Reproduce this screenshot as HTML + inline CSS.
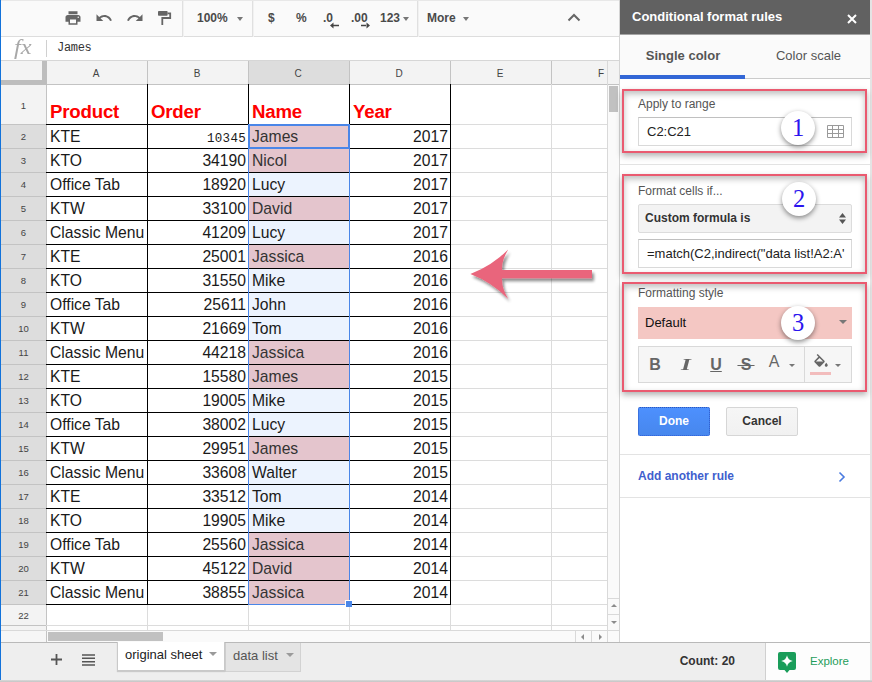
<!DOCTYPE html>
<html lang="en"><head><meta charset="utf-8"><title>Conditional format rules</title>
<style>
*{box-sizing:border-box;margin:0;padding:0}
html,body{width:872px;height:682px;overflow:hidden;background:#fff}
body{font-family:"Liberation Sans",Arial,sans-serif;color:#222}
#app{position:relative;width:872px;height:682px;overflow:hidden;background:#fff}
.abs{position:absolute}
/* left strip */
#lstrip{position:absolute;left:0;top:0;width:1px;height:680px;background:#1272da;z-index:50}
/* toolbar */
#tb{position:absolute;left:0;top:0;width:620px;height:37px;background:#fafafa;border-bottom:1px solid #dddddd;border-top:1px solid #e8e8e8}
#tb .sep{position:absolute;top:0;width:1px;height:36px;background:#e0e0e0;box-shadow:1px 0 0 #f1f1f1}
#tb .t{position:absolute;top:0;height:36px;line-height:35px;font-size:12px;font-weight:bold;color:#4a4a4a;white-space:nowrap}
#tb svg{position:absolute}
.dd{position:absolute;width:0;height:0;border-left:3.5px solid transparent;border-right:3.5px solid transparent;border-top:4px solid #777}
/* formula bar */
#fb{position:absolute;left:0;top:37px;width:620px;height:24px;background:#fff;border-bottom:1px solid #d6d6d6}
#fb .fx{position:absolute;left:14px;top:-2px;font-family:"Liberation Serif",serif;font-style:italic;font-size:20px;color:#a8a8a8;line-height:24px;letter-spacing:0;transform:scaleX(1.220);transform-origin:0 50%}
#fb .fsep{position:absolute;left:46px;top:3px;width:1px;height:17px;background:#d0d0d0}
#fb .fv{position:absolute;left:57px;top:0;font-family:"Liberation Mono","DejaVu Sans Mono",monospace;font-size:12px;line-height:23px;color:#333;letter-spacing:-.3px}
/* grid */
#grid{position:absolute;left:0;top:0;width:607px;height:630px;overflow:hidden}
.corner{position:absolute;left:0;top:61px;width:47px;height:24px;background:#f3f3f3;border-right:5px solid #bdbdbd;border-bottom:5px solid #bdbdbd}
.ch{position:absolute;top:61px;height:24px;background:#f3f3f3;border-right:1px solid #c3c3c3;border-bottom:1px solid #c3c3c3;text-align:center;font-size:10px;line-height:25px;color:#444;padding-right:2px}
.ch.sel{background:#dddddd}
.rh{position:absolute;left:0;width:47px;background:#f3f3f3;border-right:1px solid #c3c3c3;border-bottom:1px solid #c3c3c3;text-align:center;font-size:9.500px;color:#444;padding-left:1px}
.rh.sel{background:#dddddd}
.vl{position:absolute;top:84px;width:1px;height:546px;background:#dcdcdc}
.hl{position:absolute;left:46px;width:562px;height:1px;background:#dcdcdc}
.hc{position:absolute;top:85px;height:39px;font-size:18.670px;letter-spacing:-.2px;font-weight:bold;color:#f00;line-height:21px;padding:16px 0 0 3px;background:#fff;white-space:nowrap;overflow:hidden}
.c{position:absolute;height:23px;font-size:15.700px;line-height:23px;padding:0 3px;color:#1a1a1a;background:#fff;white-space:nowrap;overflow:hidden}
.c.r{text-align:right;padding-right:2px}
.c.mono{font-family:"Liberation Mono","DejaVu Sans Mono",monospace;font-size:12.500px;letter-spacing:.3px;line-height:29px;padding-right:2px}
.c.nm{background:#ecf3fe}
.c.nm.hlt{background:#e4c5cd;color:#333}
.c.nm.act{background:#e5c7ce}
.bv{position:absolute;top:84px;width:1px;height:521px;background:#000}
.bh{position:absolute;left:46px;width:405px;height:1px;background:#000}
.selrange{position:absolute;left:248px;top:124px;width:102px;height:481px;border:1px solid #4a86e8}
.active{position:absolute;left:248px;top:124px;width:102px;height:25px;border:2px solid #4a86e8}
.handle{position:absolute;left:346px;top:601px;width:6px;height:6px;background:#4a86e8;border-top:1px solid #fff;border-left:1px solid #fff;box-sizing:content-box;margin:-1px 0 0 -1px}
/* scrollbars */
#vs{position:absolute;left:607px;top:61px;width:12px;height:581px;background:#fafafa;border-left:1px solid #d9d9d9}
#vs .top{position:absolute;left:0;top:0;width:11px;height:24px;background:#f3f3f3;border-bottom:1px solid #c3c3c3}
#vs .thumb{position:absolute;left:1px;top:25px;width:9px;height:26px;background:#c1c1c1}
#vs .btns{position:absolute;left:0;top:537px;width:11px;height:33px;border-top:1px solid #d9d9d9;border-bottom:1px solid #d9d9d9;background:#fafafa}
.ta{position:absolute;width:0;height:0}
#hs{position:absolute;left:1px;top:630px;width:607px;height:12px;background:#fafafa;border-top:1px solid #d9d9d9}
#hs .thumb{position:absolute;left:47px;top:1px;width:115px;height:9px;background:#c1c1c1}
#hs .lead{position:absolute;left:0;top:0;width:46px;height:11px;border-right:1px solid #c3c3c3;background:#f6f6f6}
#hs .btns{position:absolute;left:574px;top:0;width:33px;height:11px;border-left:1px solid #d9d9d9;border-right:1px solid #d9d9d9}
/* bottom bar */
#bb{position:absolute;left:0;top:642px;width:870px;height:38px;background:#eeeeee;border-top:1px solid #b9b9b9}
#bb .tab{position:absolute;top:-1px;height:29px;font-size:13px;line-height:25px;white-space:nowrap;padding-left:7px}
#bb .tab.on{left:117px;width:108px;background:#fff;color:#222;border:1px solid #c9c9c9;border-top:none;box-shadow:0 1px 1px rgba(0,0,0,.15);z-index:2}
#bb .tab.off{left:225px;width:76px;top:0;background:#e4e4e4;color:#555;border:1px solid #d2d2d2;border-top:none;height:29px;line-height:25px}
#bb .cnt{position:absolute;right:135px;top:0;font-size:12px;font-weight:bold;color:#333;line-height:36px}
#bb .exp{position:absolute;left:765px;top:0;width:105px;height:37px;background:#fdfdfd;border-left:1px solid #d0d0d0}
#bb .exp span{position:absolute;left:44px;top:0;line-height:37px;font-size:11.500px;color:#1f9d5c}
#redge{position:absolute;left:870px;top:0;width:2px;height:682px;background:#e4e4e4}
#bedge{position:absolute;left:0;top:680px;width:872px;height:2px;background:linear-gradient(#dadada,#c4c4c4)}
/* panel */
#pn{position:absolute;left:619px;top:0;width:251px;height:642px;background:#fff;border-left:1px solid #d4d4d4}
#pn .hd{position:absolute;z-index:1;left:0;top:0;width:250px;height:35px;background:#616161;border-bottom:1px solid #a4a4a4;color:#fff;font-size:13px;font-weight:bold;line-height:34px;padding-left:12px}
#pn .tabs{position:absolute;left:0;top:34px;width:250px;height:45px;background:#fafafa;border-bottom:1px solid #cbcbcb}
#pn .tabs .a{position:absolute;left:0;top:0;width:125px;height:45px;text-align:center;line-height:44px;font-size:13px;font-weight:bold;color:#555;border-bottom:4px solid #3367d6;padding-left:1px}
#pn .tabs .b{position:absolute;left:125px;top:0;width:125px;height:44px;text-align:center;line-height:44px;font-size:13px;color:#555;padding-left:2px}
#pn .lbl{position:absolute;left:18px;font-size:12px;color:#555;line-height:14px;white-space:nowrap}
#pn .inp{position:absolute;left:18px;width:214px;height:29px;border:1px solid #d9d9d9;border-top-color:#c0c0c0;background:#fff;font-size:13px;line-height:27px;padding-left:8px;color:#222;white-space:nowrap;overflow:hidden}
#pn .selb{position:absolute;left:18px;width:214px;height:29px;border:1px solid #dcdcdc;background:#f3f3f3;font-size:12px;font-weight:bold;line-height:27px;padding-left:6px;color:#333;border-radius:2px}
#pn .line{position:absolute;left:0;width:250px;height:1px;background:#e3e3e3}
#pn .def{position:absolute;left:18px;top:307px;width:214px;height:32px;background:#f4c7c3;font-size:13px;line-height:31px;padding-left:7px;color:#111}
#pn .fmt{position:absolute;left:18px;top:346px;width:214px;height:37px;background:#f6f6f6;border:1px solid #d9d9d9}
#pn .fmt .s{position:absolute;left:165px;top:0;width:1px;height:35px;background:#d9d9d9}
#pn .fmt .g{position:absolute;top:0;height:35px;line-height:36px;font-size:16px;color:#666;text-align:center;width:20px}
#pn .done{position:absolute;left:18px;top:407px;width:72px;height:29px;background:linear-gradient(#4d90fe,#4787ed);border:1px dotted #2a56c6;border-radius:2px;color:#fff;font-size:12px;font-weight:bold;text-align:center;line-height:26px}
#pn .cancel{position:absolute;left:106px;top:407px;width:72px;height:29px;background:linear-gradient(#f6f6f6,#f1f1f1);border:1px solid #d6d6d6;border-radius:2px;color:#333;font-size:12px;font-weight:bold;text-align:center;line-height:26px}
#pn .add{position:absolute;left:18px;top:455px;font-size:12px;font-weight:bold;color:#3f5fce;line-height:42px}
/* annotations */
.rbox{position:absolute;left:622px;width:245px;border:2px solid #ea5a70;box-shadow:0 3px 6px rgba(0,0,0,.30), inset 0 3px 6px rgba(0,0,0,.26);z-index:20}
.circ{position:absolute;width:34px;height:34px;border-radius:50%;background:#fff;box-shadow:0 2px 5px rgba(0,0,0,.45);z-index:21;text-align:center;font-family:"Liberation Serif",serif;font-size:24.500px;line-height:33px;color:#2b14ee}
#arrow{position:absolute;left:460px;top:240px;z-index:22}

</style></head>
<body>
<div id="app">
<div id="lstrip"></div>
<div id="tb">
<div class="sep" style="left:182px"></div><div class="sep" style="left:252px"></div><div class="sep" style="left:417px"></div>
<svg style="left:64px;top:8px" width="18" height="18" viewBox="0 0 24 24"><path fill="#666" d="M19 8H5c-1.66 0-3 1.34-3 3v6h4v4h12v-4h4v-6c0-1.660-1.340-3-3-3zm-3 11H8v-5h8v5zm3-7c-.55 0-1-.45-1-1s.45-1 1-1 1 .45 1 1-.45 1-1 1zm-1-9H6v4h12V3z"/></svg>
<svg style="left:95px;top:8px" width="18" height="18" viewBox="0 0 24 24"><path fill="#666" d="M12.500 8c-2.650 0-5.050.99-6.900 2.600L2 7v9h9l-3.620-3.620c1.390-1.160 3.160-1.880 5.120-1.880 3.540 0 6.550 2.310 7.600 5.500l2.370-.78C21.080 11.030 17.150 8 12.500 8z"/></svg>
<svg style="left:126px;top:8px" width="18" height="18" viewBox="0 0 24 24"><path fill="#666" d="M18.400 10.600C16.550 8.990 14.150 8 11.500 8c-4.650 0-8.580 3.030-9.960 7.220L3.900 16c1.050-3.190 4.050-5.500 7.600-5.500 1.950 0 3.730.72 5.120 1.880L13 16h9V7l-3.600 3.600z"/></svg>
<svg style="left:157px;top:9px" width="15" height="16" viewBox="0 0 15 16"><rect x="1" y="1" width="9.600" height="4.800" rx=".8" fill="#666"/><path d="M10.500 3.400H13.200V8H5.300V15" fill="none" stroke="#666" stroke-width="1.800"/></svg>
<div class="t" style="left:197px">100%</div><div class="dd" style="left:237px;top:16px"></div>
<div class="t" style="left:268px">$</div>
<div class="t" style="left:296px">%</div>
<div class="t" style="left:323px">.0</div>
<svg style="left:330px;top:21px" width="9" height="7" viewBox="0 0 9 7"><path d="M0 3.500L3.500 0.500V6.500zM3 2.800H9V4.200H3z" fill="#444"/></svg>
<div class="t" style="left:351px">.00</div>
<svg style="left:361px;top:21px" width="9" height="7" viewBox="0 0 9 7"><path d="M9 3.500L5.500 0.500V6.500zM0 2.800H6V4.200H0z" fill="#444"/></svg>
<div class="t" style="left:380px">123</div><div class="dd" style="left:403px;top:16px"></div>
<div class="t" style="left:427px">More</div><div class="dd" style="left:463px;top:16px"></div>
<svg style="left:567px;top:11px" width="14" height="10" viewBox="0 0 14 10"><path d="M1.500 8.500L7 3L12.500 8.500" fill="none" stroke="#666" stroke-width="2"/></svg>
</div>
<div id="fb"><div class="fx">fx</div><div class="fsep"></div><div class="fv">James</div></div>
<div id="grid">
<div class="corner"></div>
<div class="ch" style="left:47px;width:101px">A</div>
<div class="ch" style="left:148px;width:101px">B</div>
<div class="ch sel" style="left:249px;width:101px">C</div>
<div class="ch" style="left:350px;width:101px">D</div>
<div class="ch" style="left:451px;width:101px">E</div>
<div class="ch" style="left:552px;width:101px">F</div>
<div class="rh" style="top:85px;height:40px;line-height:41px">1</div>
<div class="rh sel" style="top:125px;height:24px;line-height:24px">2</div>
<div class="rh sel" style="top:149px;height:24px;line-height:24px">3</div>
<div class="rh sel" style="top:173px;height:24px;line-height:24px">4</div>
<div class="rh sel" style="top:197px;height:24px;line-height:24px">5</div>
<div class="rh sel" style="top:221px;height:24px;line-height:24px">6</div>
<div class="rh sel" style="top:245px;height:24px;line-height:24px">7</div>
<div class="rh sel" style="top:269px;height:24px;line-height:24px">8</div>
<div class="rh sel" style="top:293px;height:24px;line-height:24px">9</div>
<div class="rh sel" style="top:317px;height:24px;line-height:24px">10</div>
<div class="rh sel" style="top:341px;height:24px;line-height:24px">11</div>
<div class="rh sel" style="top:365px;height:24px;line-height:24px">12</div>
<div class="rh sel" style="top:389px;height:24px;line-height:24px">13</div>
<div class="rh sel" style="top:413px;height:24px;line-height:24px">14</div>
<div class="rh sel" style="top:437px;height:24px;line-height:24px">15</div>
<div class="rh sel" style="top:461px;height:24px;line-height:24px">16</div>
<div class="rh sel" style="top:485px;height:24px;line-height:24px">17</div>
<div class="rh sel" style="top:509px;height:24px;line-height:24px">18</div>
<div class="rh sel" style="top:533px;height:24px;line-height:24px">19</div>
<div class="rh sel" style="top:557px;height:24px;line-height:24px">20</div>
<div class="rh sel" style="top:581px;height:24px;line-height:24px">21</div>
<div class="rh" style="top:605px;height:21px;line-height:21px">22</div>
<div class="rh" style="top:626px;height:5px"></div>
<div class="vl" style="left:147px"></div>
<div class="vl" style="left:248px"></div>
<div class="vl" style="left:349px"></div>
<div class="vl" style="left:450px"></div>
<div class="vl" style="left:551px"></div>
<div class="hl" style="top:124px"></div>
<div class="hl" style="top:148px"></div>
<div class="hl" style="top:172px"></div>
<div class="hl" style="top:196px"></div>
<div class="hl" style="top:220px"></div>
<div class="hl" style="top:244px"></div>
<div class="hl" style="top:268px"></div>
<div class="hl" style="top:292px"></div>
<div class="hl" style="top:316px"></div>
<div class="hl" style="top:340px"></div>
<div class="hl" style="top:364px"></div>
<div class="hl" style="top:388px"></div>
<div class="hl" style="top:412px"></div>
<div class="hl" style="top:436px"></div>
<div class="hl" style="top:460px"></div>
<div class="hl" style="top:484px"></div>
<div class="hl" style="top:508px"></div>
<div class="hl" style="top:532px"></div>
<div class="hl" style="top:556px"></div>
<div class="hl" style="top:580px"></div>
<div class="hl" style="top:604px"></div>
<div class="hl" style="top:625px"></div>
<div class="hc" style="left:47px;width:100px">Product</div>
<div class="hc" style="left:148px;width:100px">Order</div>
<div class="hc" style="left:249px;width:100px">Name</div>
<div class="hc" style="left:350px;width:100px">Year</div>
<div class="c" style="left:47px;top:125px;width:100px">KTE</div><div class="c r mono" style="left:148px;top:125px;width:100px">10345</div><div class="c nm hlt act" style="left:249px;top:125px;width:100px">James</div><div class="c r" style="left:350px;top:125px;width:100px">2017</div>
<div class="c" style="left:47px;top:149px;width:100px">KTO</div><div class="c r" style="left:148px;top:149px;width:100px">34190</div><div class="c nm hlt" style="left:249px;top:149px;width:100px">Nicol</div><div class="c r" style="left:350px;top:149px;width:100px">2017</div>
<div class="c" style="left:47px;top:173px;width:100px">Office Tab</div><div class="c r" style="left:148px;top:173px;width:100px">18920</div><div class="c nm" style="left:249px;top:173px;width:100px">Lucy</div><div class="c r" style="left:350px;top:173px;width:100px">2017</div>
<div class="c" style="left:47px;top:197px;width:100px">KTW</div><div class="c r" style="left:148px;top:197px;width:100px">33100</div><div class="c nm hlt" style="left:249px;top:197px;width:100px">David</div><div class="c r" style="left:350px;top:197px;width:100px">2017</div>
<div class="c" style="left:47px;top:221px;width:100px">Classic Menu</div><div class="c r" style="left:148px;top:221px;width:100px">41209</div><div class="c nm" style="left:249px;top:221px;width:100px">Lucy</div><div class="c r" style="left:350px;top:221px;width:100px">2017</div>
<div class="c" style="left:47px;top:245px;width:100px">KTE</div><div class="c r" style="left:148px;top:245px;width:100px">25001</div><div class="c nm hlt" style="left:249px;top:245px;width:100px">Jassica</div><div class="c r" style="left:350px;top:245px;width:100px">2016</div>
<div class="c" style="left:47px;top:269px;width:100px">KTO</div><div class="c r" style="left:148px;top:269px;width:100px">31550</div><div class="c nm" style="left:249px;top:269px;width:100px">Mike</div><div class="c r" style="left:350px;top:269px;width:100px">2016</div>
<div class="c" style="left:47px;top:293px;width:100px">Office Tab</div><div class="c r" style="left:148px;top:293px;width:100px">25611</div><div class="c nm" style="left:249px;top:293px;width:100px">John</div><div class="c r" style="left:350px;top:293px;width:100px">2016</div>
<div class="c" style="left:47px;top:317px;width:100px">KTW</div><div class="c r" style="left:148px;top:317px;width:100px">21669</div><div class="c nm" style="left:249px;top:317px;width:100px">Tom</div><div class="c r" style="left:350px;top:317px;width:100px">2016</div>
<div class="c" style="left:47px;top:341px;width:100px">Classic Menu</div><div class="c r" style="left:148px;top:341px;width:100px">44218</div><div class="c nm hlt" style="left:249px;top:341px;width:100px">Jassica</div><div class="c r" style="left:350px;top:341px;width:100px">2016</div>
<div class="c" style="left:47px;top:365px;width:100px">KTE</div><div class="c r" style="left:148px;top:365px;width:100px">15580</div><div class="c nm hlt" style="left:249px;top:365px;width:100px">James</div><div class="c r" style="left:350px;top:365px;width:100px">2015</div>
<div class="c" style="left:47px;top:389px;width:100px">KTO</div><div class="c r" style="left:148px;top:389px;width:100px">19005</div><div class="c nm" style="left:249px;top:389px;width:100px">Mike</div><div class="c r" style="left:350px;top:389px;width:100px">2015</div>
<div class="c" style="left:47px;top:413px;width:100px">Office Tab</div><div class="c r" style="left:148px;top:413px;width:100px">38002</div><div class="c nm" style="left:249px;top:413px;width:100px">Lucy</div><div class="c r" style="left:350px;top:413px;width:100px">2015</div>
<div class="c" style="left:47px;top:437px;width:100px">KTW</div><div class="c r" style="left:148px;top:437px;width:100px">29951</div><div class="c nm hlt" style="left:249px;top:437px;width:100px">James</div><div class="c r" style="left:350px;top:437px;width:100px">2015</div>
<div class="c" style="left:47px;top:461px;width:100px">Classic Menu</div><div class="c r" style="left:148px;top:461px;width:100px">33608</div><div class="c nm" style="left:249px;top:461px;width:100px">Walter</div><div class="c r" style="left:350px;top:461px;width:100px">2015</div>
<div class="c" style="left:47px;top:485px;width:100px">KTE</div><div class="c r" style="left:148px;top:485px;width:100px">33512</div><div class="c nm" style="left:249px;top:485px;width:100px">Tom</div><div class="c r" style="left:350px;top:485px;width:100px">2014</div>
<div class="c" style="left:47px;top:509px;width:100px">KTO</div><div class="c r" style="left:148px;top:509px;width:100px">19905</div><div class="c nm" style="left:249px;top:509px;width:100px">Mike</div><div class="c r" style="left:350px;top:509px;width:100px">2014</div>
<div class="c" style="left:47px;top:533px;width:100px">Office Tab</div><div class="c r" style="left:148px;top:533px;width:100px">25560</div><div class="c nm hlt" style="left:249px;top:533px;width:100px">Jassica</div><div class="c r" style="left:350px;top:533px;width:100px">2014</div>
<div class="c" style="left:47px;top:557px;width:100px">KTW</div><div class="c r" style="left:148px;top:557px;width:100px">45122</div><div class="c nm hlt" style="left:249px;top:557px;width:100px">David</div><div class="c r" style="left:350px;top:557px;width:100px">2014</div>
<div class="c" style="left:47px;top:581px;width:100px">Classic Menu</div><div class="c r" style="left:148px;top:581px;width:100px">38855</div><div class="c nm hlt" style="left:249px;top:581px;width:100px">Jassica</div><div class="c r" style="left:350px;top:581px;width:100px">2014</div>
<div class="bv" style="left:147px"></div>
<div class="bv" style="left:248px"></div>
<div class="bv" style="left:349px"></div>
<div class="bv" style="left:450px"></div>
<div class="bh" style="top:124px"></div>
<div class="bh" style="top:148px"></div>
<div class="bh" style="top:172px"></div>
<div class="bh" style="top:196px"></div>
<div class="bh" style="top:220px"></div>
<div class="bh" style="top:244px"></div>
<div class="bh" style="top:268px"></div>
<div class="bh" style="top:292px"></div>
<div class="bh" style="top:316px"></div>
<div class="bh" style="top:340px"></div>
<div class="bh" style="top:364px"></div>
<div class="bh" style="top:388px"></div>
<div class="bh" style="top:412px"></div>
<div class="bh" style="top:436px"></div>
<div class="bh" style="top:460px"></div>
<div class="bh" style="top:484px"></div>
<div class="bh" style="top:508px"></div>
<div class="bh" style="top:532px"></div>
<div class="bh" style="top:556px"></div>
<div class="bh" style="top:580px"></div>
<div class="bh" style="top:604px"></div>
<div class="selrange"></div><div class="active"></div><div class="handle"></div>
</div>
<div id="vs"><div class="top"></div><div class="thumb"></div>
<div class="btns">
<div class="ta" style="left:3px;top:5px;border-left:3px solid transparent;border-right:3px solid transparent;border-bottom:3.500px solid #8c8c8c"></div>
<div style="position:absolute;left:0;top:15px;width:11px;height:1px;background:#d9d9d9"></div>
<div class="ta" style="left:3px;top:22px;border-left:3px solid transparent;border-right:3px solid transparent;border-top:3.500px solid #8c8c8c"></div>
</div></div>
<div id="hs"><div class="lead"></div><div class="thumb"></div>
<div class="btns">
<div class="ta" style="left:5px;top:3px;border-top:3px solid transparent;border-bottom:3px solid transparent;border-right:3.500px solid #8c8c8c"></div>
<div style="position:absolute;left:15px;top:0;width:1px;height:11px;background:#d9d9d9"></div>
<div class="ta" style="left:23px;top:3px;border-top:3px solid transparent;border-bottom:3px solid transparent;border-left:3.500px solid #8c8c8c"></div>
</div></div>
<div id="pn">
<div class="hd">Conditional format rules</div>
<svg class="abs" style="left:227px;top:14px;z-index:2" width="10" height="10" viewBox="0 0 10 10"><path d="M1 1L9 9M9 1L1 9" stroke="#fff" stroke-width="2" fill="none"/></svg>
<div class="tabs"><div class="a">Single color</div><div class="b">Color scale</div></div>
<div class="lbl" style="top:97px">Apply to range</div>
<div class="inp" style="top:117px">C2:C21</div>
<svg class="abs" style="left:207px;top:125px" width="17" height="13" viewBox="0 0 17 13"><path d="M.500 .500H16.500V12.500H.500zM.500 4.500H16.500M.500 8.500H16.500M5.500 .500V12.500M11.500 .500V12.500" fill="none" stroke="#9a9a9a" stroke-width="1"/></svg>
<div class="line" style="top:164px"></div>
<div class="lbl" style="top:184px">Format cells if...</div>
<div class="selb" style="top:204px">Custom formula is</div>
<svg class="abs" style="left:219px;top:213px" width="7" height="11" viewBox="0 0 7 11"><path d="M0 4.500L3.500 0L7 4.500zM0 6.500L3.500 11L7 6.500z" fill="#555"/></svg>
<div class="inp" style="top:239px">=match(C2,indirect("data list!A2:A'</div>
<div class="lbl" style="top:286px">Formatting style</div>
<div class="def">Default</div>
<div class="dd" style="left:219px;top:320px;border-width:4px 4px 0 4px;border-top-color:#777"></div>
<div class="fmt"><div class="s"></div>
<div class="g" style="left:6px;font-weight:bold">B</div>
<div class="g" style="left:37px;font-style:italic;font-family:'Liberation Serif',serif;font-size:17px;font-weight:bold;transform:scaleX(1.500)">I</div>
<div class="g" style="left:67px;text-decoration:underline;font-weight:bold;font-size:16px">U</div>
<div class="g" style="left:95px;width:24px;text-decoration:line-through;font-weight:bold;font-size:16px">&#8201;S&#8201;</div>
<div class="g" style="left:125px;top:-3px">A</div>
<div class="dd" style="left:150px;top:17px;border-width:3.500px 3px 0 3px"></div>
<svg class="abs" style="left:173px;top:7px" width="18" height="18" viewBox="0 0 24 24"><path fill="#666" d="M16.560 8.940L7.620 0 6.210 1.410l2.380 2.380-5.150 5.150c-.59.590-.59 1.540 0 2.120l5.500 5.500c.29.290.68.440 1.060.440s.77-.15 1.060-.44l5.500-5.500c.59-.58.590-1.530 0-2.120zM5.210 10L10 5.210 14.790 10H5.210zM19 11.500s-2 2.170-2 3.500c0 1.100.9 2 2 2s2-.9 2-2c0-1.330-2-3.500-2-3.500z"/></svg>
<div class="abs" style="left:171px;top:25px;width:21px;height:3px;background:#f2bcbc"></div>
<div class="dd" style="left:196px;top:17px;border-width:3.500px 3px 0 3px"></div>
</div>
<div class="done">Done</div><div class="cancel">Cancel</div>
<div class="line" style="top:454px"></div>
<div class="add">Add another rule</div>
<svg class="abs" style="left:218px;top:471px" width="8" height="12" viewBox="0 0 8 12"><path d="M1.500 1.500L6 6L1.500 10.500" fill="none" stroke="#4a7be0" stroke-width="1.600"/></svg>
<div class="line" style="top:497px"></div>
</div>
<div id="bb">
<svg class="abs" style="left:51px;top:11px" width="11" height="11" viewBox="0 0 11 11"><path d="M5.500 0V11M0 5.500H11" stroke="#555" stroke-width="1.800" fill="none"/></svg>
<svg class="abs" style="left:82px;top:11px" width="13" height="12" viewBox="0 0 13 12"><path d="M0 1H13M0 4.300H13M0 7.700H13M0 11H13" stroke="#555" stroke-width="1.500" fill="none"/></svg>
<div class="tab on">original sheet<div class="dd" style="left:91px;top:10px;border-width:4px 4px 0 4px;border-top-color:#9a9a9a"></div></div>
<div class="tab off">data list<div class="dd" style="left:60px;top:10px;border-width:4px 4px 0 4px;border-top-color:#9a9a9a"></div></div>
<div class="cnt">Count: 20</div>
<div class="exp">
<svg class="abs" style="left:12px;top:9px" width="18" height="22" viewBox="0 0 18 22"><path d="M2 0H16Q18 0 18 2V16Q18 18 16 18H11.500L9 21L6.500 18H2Q0 18 0 16V2Q0 0 2 0Z" fill="#1a9d5a"/><path d="M9 3.200Q9.900 8.100 14.800 9Q9.900 9.900 9 14.800Q8.100 9.900 3.200 9Q8.100 8.100 9 3.200Z" fill="#fff"/></svg>
<span>Explore</span></div>
</div>
<div id="redge"></div><div id="bedge"></div>
<div class="rbox" style="top:89px;height:64px"></div>
<div class="rbox" style="top:174px;height:100px"></div>
<div class="rbox" style="top:282px;height:110px"></div>
<div class="circ" style="left:781px;top:111px">1</div>
<div class="circ" style="left:782px;top:182px">2</div>
<div class="circ" style="left:781px;top:306px">3</div>
<svg id="arrow" width="150" height="80" viewBox="0 0 150 80">
<defs><filter id="sh" x="-10%" y="-10%" width="130%" height="140%"><feGaussianBlur in="SourceAlpha" stdDeviation="1.500"/><feOffset dx="1.500" dy="2.500"/><feComponentTransfer><feFuncA type="linear" slope=".45"/></feComponentTransfer><feMerge><feMergeNode/><feMergeNode in="SourceGraphic"/></feMerge></filter></defs>
<path filter="url(#sh)" d="M10.400 34.100Q31.900 25.900 48.200 9.600Q41.300 21 42.100 29.900L132 29.900V38.300H42.100Q41.300 47.200 48.200 59Q31.900 42.300 10.400 34.100Z" fill="#e9657b"/>
</svg>
</div>
</body></html>
